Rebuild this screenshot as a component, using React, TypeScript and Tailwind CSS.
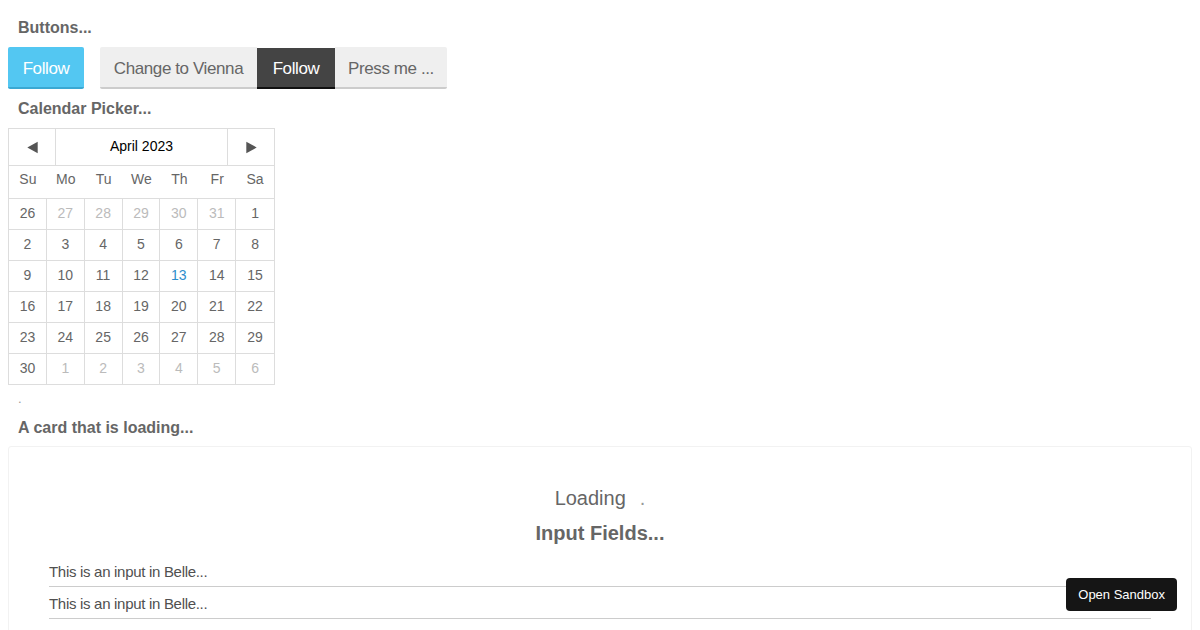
import React from 'react';

const weekDays = ['Su', 'Mo', 'Tu', 'We', 'Th', 'Fr', 'Sa'];

// [day, muted]
const weeks: [number, boolean][][] = [
  [[26, false], [27, true], [28, true], [29, true], [30, true], [31, true], [1, false]],
  [[2, false], [3, false], [4, false], [5, false], [6, false], [7, false], [8, false]],
  [[9, false], [10, false], [11, false], [12, false], [13, false], [14, false], [15, false]],
  [[16, false], [17, false], [18, false], [19, false], [20, false], [21, false], [22, false]],
  [[23, false], [24, false], [25, false], [26, false], [27, false], [28, false], [29, false]],
  [[30, false], [1, true], [2, true], [3, true], [4, true], [5, true], [6, true]],
];

const Heading = ({ children }: { children: React.ReactNode }) => (
  <h3 className="px-[10px] pt-px text-[16px] font-bold leading-[19px] text-[#666]">{children}</h3>
);

const Calendar = () => (
  <div className="w-[267px] border border-[#ddd] text-[14px] text-[#666]">
    {/* --- header --- */}
    <div className="flex h-[37px] items-center border-b border-[#ddd]">
      <div className="flex h-full w-[47px] items-center justify-center border-r border-[#ddd]">
        <svg width="13" height="13" viewBox="0 0 10 10"><path d="M9 0.5 L1 5 L9 9.5Z" fill="#555" /></svg>
      </div>
      <div className="flex-1 pb-[2px] text-center text-[14px] text-black">April 2023</div>
      <div className="flex h-full w-[47px] items-center justify-center border-l border-[#ddd]">
        <svg width="13" height="13" viewBox="0 0 10 10"><path d="M1 0.5 L9 5 L1 9.5Z" fill="#555" /></svg>
      </div>
    </div>
    {/* --- weekdays --- */}
    <div className="grid h-[33px] grid-cols-7 items-start border-b border-[#ddd] pt-[3px]">
      {weekDays.map((d) => (
        <div key={d} className="text-center">{d}</div>
      ))}
    </div>
    {/* --- days --- */}
    {weeks.map((week, wi) => (
      <div key={wi} className={`grid grid-cols-7 ${wi < weeks.length - 1 ? 'h-[31px] border-b border-[#ddd]' : 'h-[30px]'}`}>
        {week.map(([day, muted], di) => (
          <div
            key={di}
            className={`flex items-center justify-center pb-[2px] ${di < 6 ? 'border-r border-[#ddd]' : ''} ${
              muted ? 'text-[#bbb]' : day === 13 && wi === 2 ? 'text-[#2e8ecc]' : 'text-[#666]'
            }`}
          >
            {day}
          </div>
        ))}
      </div>
    ))}
  </div>
);

const App = () => {
  return (
    <div className="min-h-[630px] bg-white pt-[17px] pl-[8px] pr-[8px] font-['Liberation_Sans',Arial,sans-serif] text-[#666]">
      <Heading>Buttons...</Heading>

      {/* --- buttons --- */}
      <div className="mt-[10px] flex items-start whitespace-nowrap text-[17px] tracking-[-0.4px]">
        <button className="h-[42px] w-[76px] rounded-[2px] border-b-2 border-[#3aa8d3] bg-[#53c7f2] pt-[3px] text-white">
          Follow
        </button>
        <div className="ml-[16px] flex">
          <button className="h-[42px] w-[157px] rounded-l-[2px] border-b-2 border-[#ccc] bg-[#efefef] pt-[3px] text-[#666]">
            Change to Vienna
          </button>
          <button className="mt-px h-[41px] w-[78px] border-b-2 border-[#111] bg-[#444] pt-[2px] text-white">
            Follow
          </button>
          <button className="h-[42px] w-[112px] rounded-r-[2px] border-b-2 border-[#ccc] bg-[#efefef] pt-[3px] text-[#666]">
            Press me ...
          </button>
        </div>
      </div>

      <div className="mt-[9px]">
        <Heading>Calendar Picker...</Heading>
      </div>
      <div className="mt-[10px]">
        <Calendar />
      </div>

      <div className="mt-[4px] px-[10px] text-[13px] leading-[20px] text-[#999]">.</div>

      <div className="mt-[8px]">
        <Heading>A card that is loading...</Heading>
      </div>

      {/* --- loading card --- */}
      <div className="mt-[9px] rounded-[3px] border border-[#f2f2f2] px-[40px] pt-[39px] pb-[20px]">
        <div className="flex justify-center text-[20px] leading-[24px] text-[#666]">
          <span>Loading</span>
          <span className="ml-[14px] text-[#999]">.</span>
        </div>
        <h2 className="mt-[10px] text-center text-[20px] font-bold leading-[26px] text-[#666]">Input Fields...</h2>
        <div className="mt-[16px] flex flex-col text-[15px] leading-[20px] tracking-[-0.3px] text-[#505050]">
          <div className="border-b border-[#ccc] pb-[4px]">This is an input in Belle...</div>
          <div className="border-b border-[#ccc] pt-[7px] pb-[4px]">This is an input in Belle...</div>
        </div>
      </div>

      {/* --- overlay button --- */}
      <button className="fixed right-[23px] bottom-[19px] h-[33px] rounded-[4px] bg-[#151515] px-[12px] text-[13px] text-white">
        Open Sandbox
      </button>
    </div>
  );
};

export default App;
